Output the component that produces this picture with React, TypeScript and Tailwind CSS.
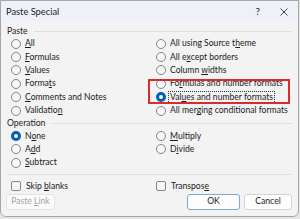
import React from "react";

type Opt = { pre: string; key: string; post: string; checked?: boolean; focus?: boolean };

const U = ({ pre, k, post }: { pre: string; k: string; post: string }) => (
  <span className="whitespace-nowrap">
    {pre}
    <span className="underline underline-offset-[1px] decoration-[0.75px]">{k}</span>
    {post}
  </span>
);

function Radio({ o }: { o: Opt }) {
  return (
    <div className="h-[13.4px] flex items-center whitespace-nowrap">
      {o.checked ? (
        <span className="w-[10px] h-[10px] rounded-full bg-[#005fb8] flex items-center justify-center shrink-0">
          <span className="w-[4px] h-[4px] rounded-full bg-white" />
        </span>
      ) : (
        <span className="w-[10px] h-[10px] rounded-full border border-[#858585] bg-[#f7f7f7] shrink-0" />
      )}
      <span
        className={
          "ml-[3px] leading-[11px] px-[1px] " +
          (o.focus ? "outline outline-1 outline-dotted outline-[#333]" : "")
        }
      >
        <U pre={o.pre} k={o.key} post={o.post} />
      </span>
    </div>
  );
}

function Check({ pre, k, post }: { pre: string; k: string; post: string }) {
  return (
    <div className="h-[13.4px] flex items-center">
      <span className="w-[10px] h-[10px] rounded-[2px] border border-[#858585] bg-[#f7f7f7] shrink-0" />
      <span className="ml-[5px]">
        <U pre={pre} k={k} post={post} />
      </span>
    </div>
  );
}

function Header({ label }: { label: string }) {
  return (
    <div className="h-[12px] flex items-center pl-[6px] pr-[6px]">
      <span>{label}</span>
      <div className="flex-1 h-px bg-[#dedede] ml-[6px]" />
    </div>
  );
}

const pasteLeft: Opt[] = [
  { pre: "", key: "A", post: "ll" },
  { pre: "", key: "F", post: "ormulas" },
  { pre: "", key: "V", post: "alues" },
  { pre: "Forma", key: "t", post: "s" },
  { pre: "", key: "C", post: "omments and Notes" },
  { pre: "Validatio", key: "n", post: "" },
];

const pasteRight: Opt[] = [
  { pre: "All using Source t", key: "h", post: "eme" },
  { pre: "All e", key: "x", post: "cept borders" },
  { pre: "Column ", key: "w", post: "idths" },
  { pre: "Fo", key: "r", post: "mulas and number formats" },
  { pre: "Val", key: "u", post: "es and number formats", checked: true, focus: true },
  { pre: "All mer", key: "g", post: "ing conditional formats" },
];

const opLeft: Opt[] = [
  { pre: "N", key: "o", post: "ne", checked: true },
  { pre: "A", key: "d", post: "d" },
  { pre: "", key: "S", post: "ubtract" },
];

const opRight: Opt[] = [
  { pre: "", key: "M", post: "ultiply" },
  { pre: "D", key: "i", post: "vide" },
];

export default function App() {
  return (
    <div
      className="w-[300px] h-[219px] bg-[#e6e6e6] overflow-hidden text-[8.6px] text-[#1b1b1b]"
      style={{ fontFamily: 'Lato, "Noto Sans", sans-serif' }}
    >
      <div className="relative w-[299px] h-[217px] border border-[#a6a6a6] rounded-b-[6px] bg-[#f3f3f3] flex flex-col overflow-hidden">
        {/* title bar */}
        <div className="h-[21px] bg-[#eef2f8] flex items-center pl-[5px] shrink-0">
          <span className="text-[9.3px]">Paste Special</span>
          <span className="ml-auto mr-[20px] text-[10px]">?</span>
          <svg width="8" height="8" viewBox="0 0 8 8" className="mr-[10px]">
            <path d="M0.5 0.5 L7.5 7.5 M7.5 0.5 L0.5 7.5" stroke="#333" strokeWidth="0.9" />
          </svg>
        </div>

        <div className="mt-[3px]">
          <Header label="Paste" />
        </div>
        <div className="grid grid-cols-[145px_1fr] pl-[10px]">
          <div>
            {pasteLeft.map((o, i) => (
              <Radio key={i} o={o} />
            ))}
          </div>
          <div>
            {pasteRight.map((o, i) => (
              <Radio key={i} o={o} />
            ))}
          </div>
        </div>

        <Header label="Operation" />
        <div className="grid grid-cols-[145px_1fr] pl-[10px]">
          <div>
            {opLeft.map((o, i) => (
              <Radio key={i} o={o} />
            ))}
          </div>
          <div>
            {opRight.map((o, i) => (
              <Radio key={i} o={o} />
            ))}
          </div>
        </div>

        <div className="mt-[4px] mx-[6px] h-px bg-[#dedede]" />

        <div className="grid grid-cols-[145px_1fr] pl-[10px] mt-[5px]">
          <Check pre="Skip " k="b" post="lanks" />
          <Check pre="Transpos" k="e" post="" />
        </div>

        <div className="flex items-center mt-[1px] px-[5px]">
          <div className="w-[49px] h-[16px] rounded-[3px] border border-[#e2e2e2] bg-[#fbfbfb] text-[#a3a3a3] flex items-center justify-center">
            <U pre="Paste " k="L" post="ink" />
          </div>
          <div className="ml-auto w-[53px] h-[16px] rounded-[3px] border border-[#7ea6d6] bg-[#fdfdfd] flex items-center justify-center">
            OK
          </div>
          <div className="ml-[4px] mr-[1px] w-[48px] h-[16px] rounded-[3px] border border-[#d2d2d2] bg-[#fdfdfd] flex items-center justify-center">
            Cancel
          </div>
        </div>

        {/* annotation */}
        <div className="absolute left-[147px] top-[78px] w-[142px] h-[25px] border-2 border-[#db2b2b]" />
      </div>
    </div>
  );
}
